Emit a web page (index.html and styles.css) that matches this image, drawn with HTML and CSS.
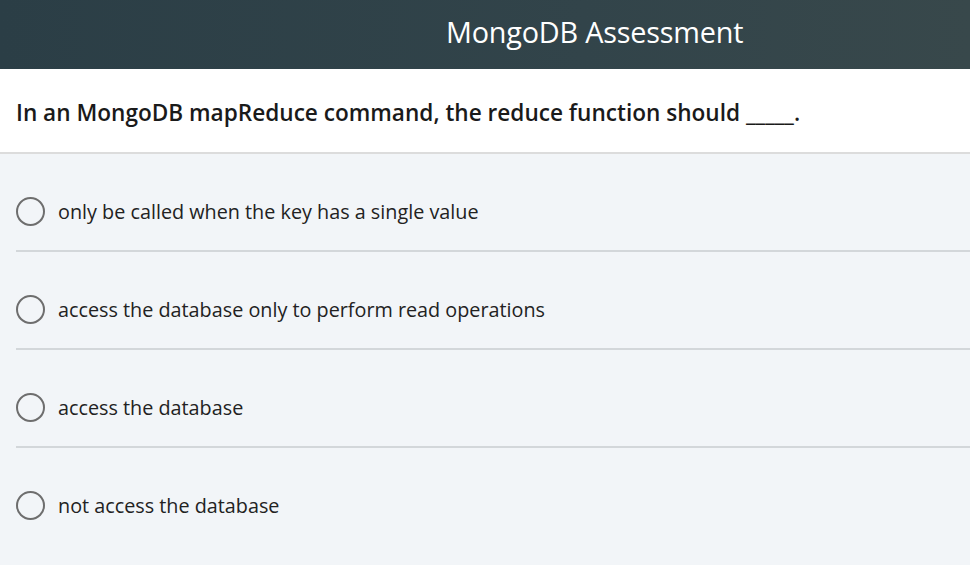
FILE: index.html
```html
<!DOCTYPE html>
<html lang="en">
<head>
<meta charset="utf-8">
<title>MongoDB Assessment</title>
<link rel="stylesheet" href="styles.css">
</head>
<body>
<header class="topbar">
  <h1 class="topbar-title">MongoDB Assessment</h1>
</header>
<section class="question">
  <h2 class="question-text">In an MongoDB mapReduce command, the reduce function should _____.</h2>
</section>
<form class="options">
  <label class="option"><span class="radio"></span><span class="option-text">only be called when the key has a single value</span></label>
  <label class="option"><span class="radio"></span><span class="option-text">access the database only to perform read operations</span></label>
  <label class="option"><span class="radio"></span><span class="option-text">access the database</span></label>
  <label class="option"><span class="radio"></span><span class="option-text">not access the database</span></label>
</form>
</body>
</html>
```
FILE: styles.css
```css
html, body {
  margin: 0;
  padding: 0;
}
body {
  font-family: "Open Sans", "Noto Sans", sans-serif;
  background: #f2f5f8;
  color: #1e1e1e;
  height: 565px;
  overflow: hidden;
}
.topbar {
  height: 69px;
  background: linear-gradient(90deg, #2b3e46 0%, #32444a 60%, #38484b 100%);
  display: flex;
  align-items: center;
  padding-left: 446px;
  padding-bottom: 6px;
  box-sizing: border-box;
}
.topbar-title {
  margin: 0;
  font-weight: 400;
  font-size: 28.8px;
  color: #ffffff;
  letter-spacing: -0.2px;
}
.question {
  background: #ffffff;
  height: 85px;
  border-bottom: 2px solid #dcdcdc;
  display: flex;
  align-items: center;
  padding-left: 16px;
  padding-top: 4px;
  box-sizing: border-box;
}
.question-text {
  margin: 0;
  font-size: 22.6px;
  font-weight: 600;
  color: #1a1a1a;
}
.options {
  display: flex;
  flex-direction: column;
  padding-left: 16px;
}
.option {
  display: flex;
  align-items: center;
  gap: 13px;
  padding: 43px 0 24px;
  border-bottom: 2px solid #d3d7da;
}
.option:last-child {
  border-bottom: none;
}
.radio {
  width: 25px;
  height: 25px;
  border: 2px solid #6e6e6e;
  border-radius: 50%;
  flex: none;
}
.option-text {
  font-size: 19.8px;
  color: #222;
}
```
